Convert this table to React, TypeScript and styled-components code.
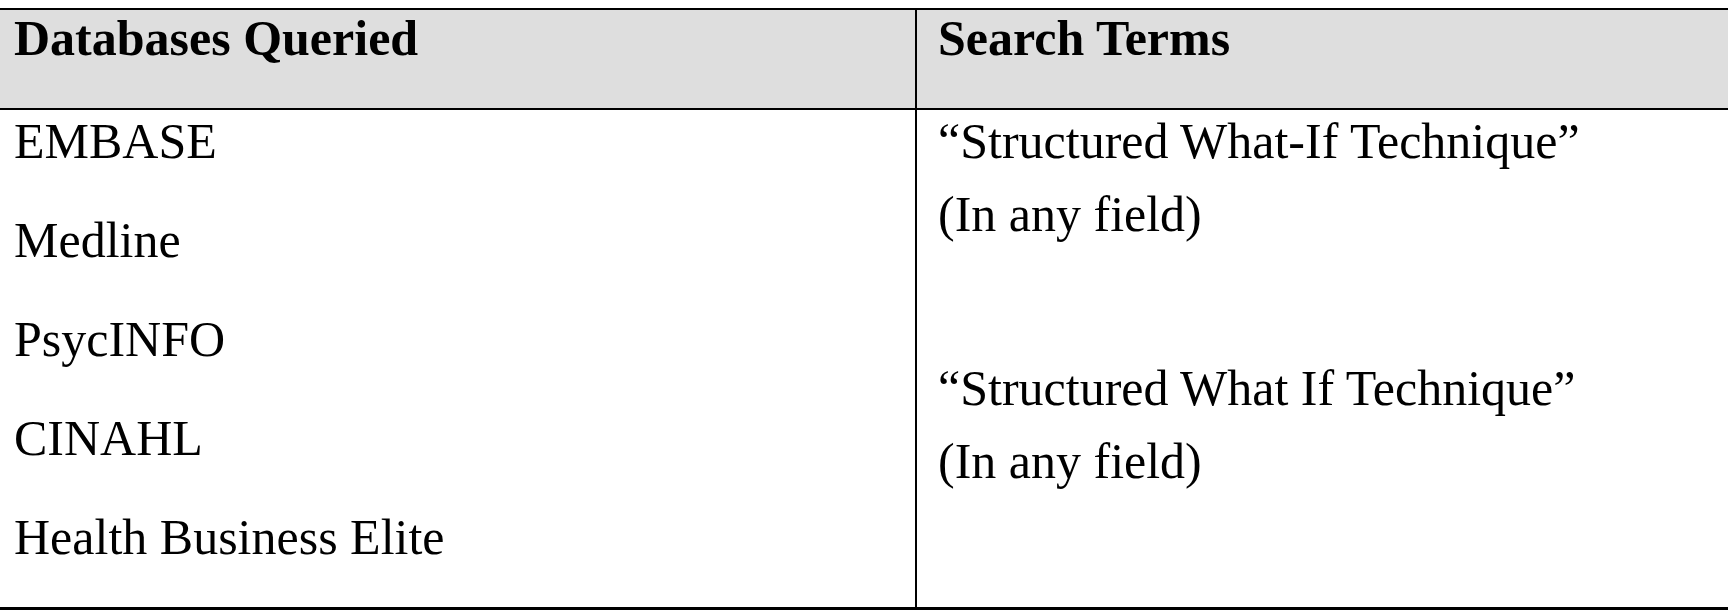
import React from 'react'
import styled, { createGlobalStyle } from 'styled-components'

const GlobalStyle = createGlobalStyle`
    html, body {
        margin: 0;
        padding: 0;
        background: #ffffff;
    }
`

const databases = ['EMBASE', 'Medline', 'PsycINFO', 'CINAHL', 'Health Business Elite']

const terms = [
    { phrase: '\u201CStructured What-If Technique\u201D', scope: '(In any field)' },
    { phrase: '\u201CStructured What If Technique\u201D', scope: '(In any field)' },
]

const App: React.FC = () => {
    return (
        <>
            <GlobalStyle />
            <Page>
                <Table>
                    <HeaderRow>
                        <HeaderCell>Databases Queried</HeaderCell>
                        <HeaderCell divider>Search Terms</HeaderCell>
                    </HeaderRow>
                    <BodyRow>
                        <DatabaseCell>
                            {databases.map(db => <Line key={db}>{db}</Line>)}
                        </DatabaseCell>
                        <TermsCell>
                            {terms.map((t, i) => (
                                <TermBlock key={i}>
                                    <Line>{t.phrase}</Line>
                                    <Line>{t.scope}</Line>
                                </TermBlock>
                            ))}
                        </TermsCell>
                    </BodyRow>
                </Table>
            </Page>
        </>
    )
}

const Page = styled.div`
    padding-top: 8px;
    width: 1728px;
    font-family: "Liberation Serif", "Times New Roman", serif;
    color: #000;
`

const Table = styled.div`
    border-top: 2px solid #000;
    border-bottom: 3px solid #000;
`

const HeaderRow = styled.div`
    display: grid;
    grid-template-columns: 915px 1fr;
    height: 98px;
    background-color: #dedede;
    border-bottom: 2px solid #000;
`

const HeaderCell = styled.div<{ divider?: boolean }>`
    font-weight: bold;
    font-size: 50px;
    line-height: 56px;
    padding-left: ${p => p.divider ? '21px' : '14px'};
    border-left: ${p => p.divider ? '2px solid #000' : 'none'};
`

const BodyRow = styled.div`
    display: grid;
    grid-template-columns: 915px 1fr;
    height: 497px;
`

const DatabaseCell = styled.div`
    display: flex;
    flex-direction: column;
    gap: 39px;
    padding: 1px 0 0 14px;
`

const TermsCell = styled.div`
    display: flex;
    flex-direction: column;
    gap: 114px;
    padding: 1px 0 0 21px;
    border-left: 2px solid #000;
`

const TermBlock = styled.div`
    display: flex;
    flex-direction: column;
    gap: 13px;
`

const Line = styled.div`
    font-size: 50px;
    line-height: 60px;
    white-space: nowrap;
`

export default App
